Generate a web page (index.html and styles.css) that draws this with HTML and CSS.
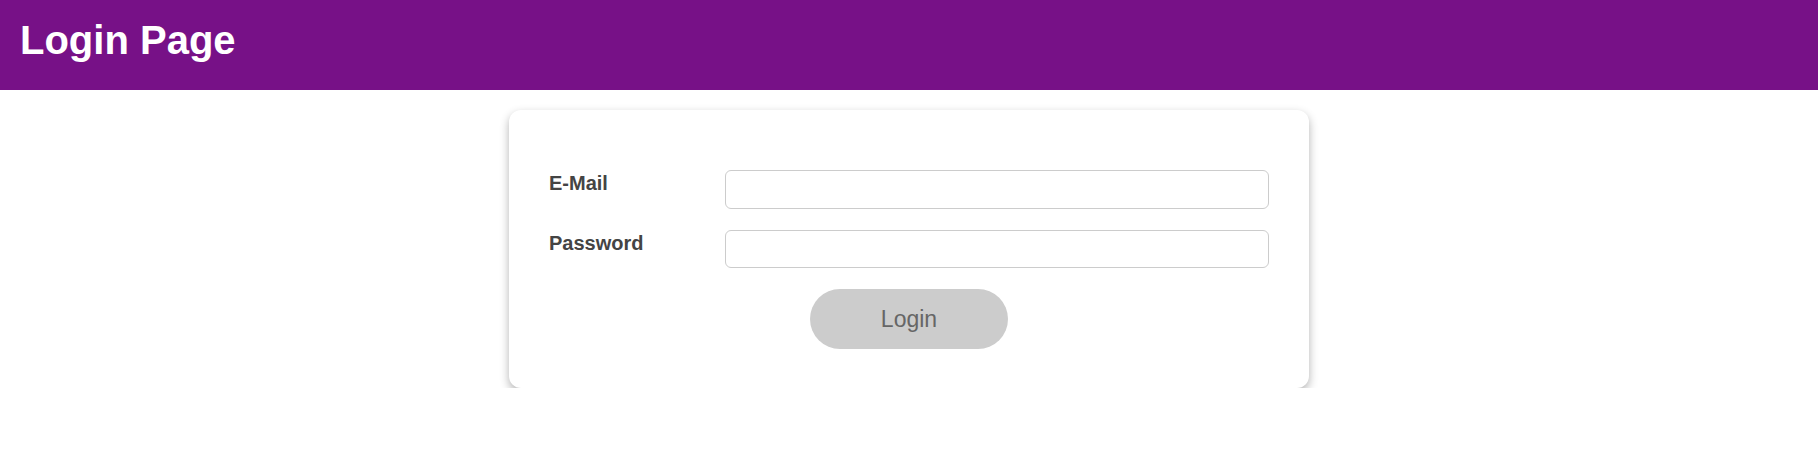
FILE: index.html
```html
<!DOCTYPE html>
<html>
<head>
<meta charset="utf-8">
<link rel="stylesheet" href="styles.css">
</head>
<body>
<header class="topbar">
  <h1 class="title">Login Page</h1>
</header>
<main class="page">
  <form class="card">
    <div class="row">
      <label class="label" for="email">E-Mail</label>
      <input class="field" id="email" type="email">
    </div>
    <div class="row">
      <label class="label" for="pw">Password</label>
      <input class="field" id="pw" type="password">
    </div>
    <div class="actions">
      <button class="btn" type="button">Login</button>
    </div>
  </form>
</main>
</body>
</html>
```
FILE: styles.css
```css
html, body {
  margin: 0;
  padding: 0;
  background: #fff;
  font-family: "Liberation Sans", Arial, sans-serif;
}
.topbar {
  box-sizing: border-box;
  height: 90px;
  background: #771187;
  padding: 17px 20px 0;
}
.title {
  margin: 0;
  color: #fff;
  font-size: 40px;
  font-weight: bold;
  line-height: 46px;
}
.page {
  display: flex;
  justify-content: center;
  padding-top: 20px;
}
.card {
  box-sizing: border-box;
  width: 800px;
  height: 278px;
  background: #fff;
  border-radius: 12px;
  box-shadow: 0 4px 10px rgba(0, 0, 0, 0.3);
  padding: 60px 40px 39px 40px;
  display: flex;
  flex-direction: column;
  gap: 21px;
}
.row {
  display: flex;
  align-items: flex-start;
}
.label {
  width: 176px;
  flex: none;
  color: #444;
  font-size: 20px;
  font-weight: bold;
  line-height: 23px;
  padding-top: 2px;
}
.field {
  box-sizing: border-box;
  flex: 1;
  height: 39px;
  margin: 0;
  border: 1px solid #ccc;
  border-radius: 6px;
  background: #fff;
  font-size: 16px;
  padding: 0 10px;
  outline: none;
}
.row + .row .field {
  height: 38px;
}
.actions {
  display: flex;
  justify-content: center;
}
.btn {
  width: 198px;
  height: 60px;
  border: none;
  border-radius: 30px;
  background: #ccc;
  color: #666;
  font-family: "Liberation Sans", Arial, sans-serif;
  font-size: 23px;
  padding: 0;
}
```
